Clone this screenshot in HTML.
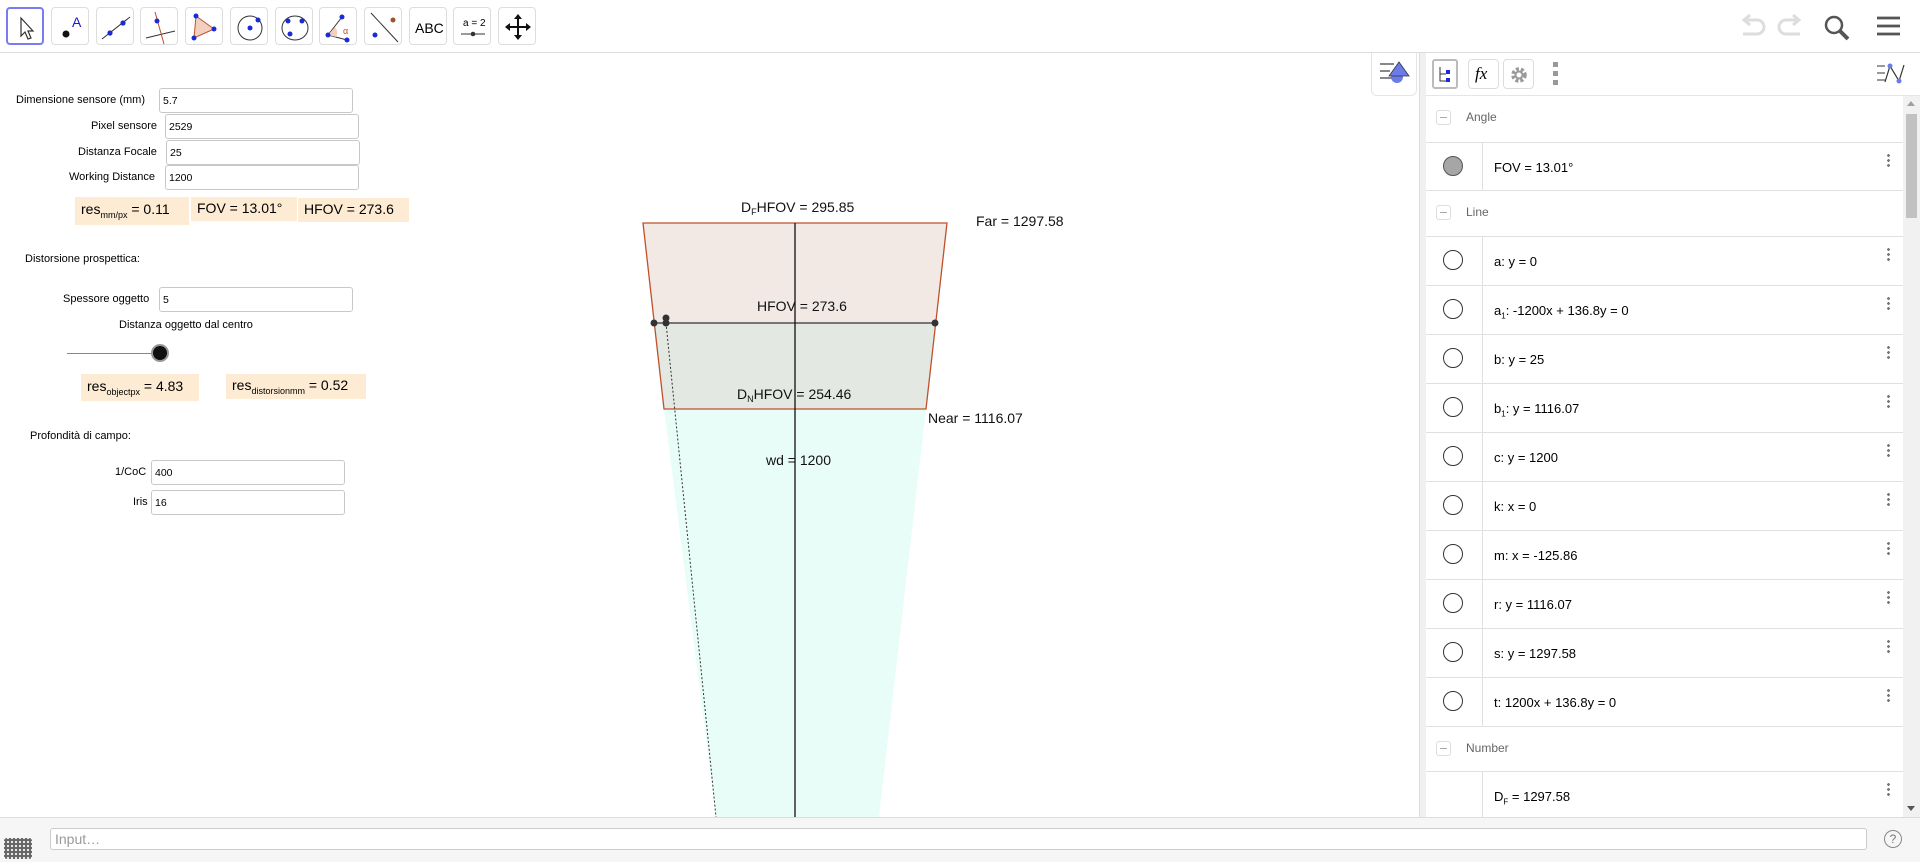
<!DOCTYPE html>
<html><head><meta charset="utf-8"><style>
*{box-sizing:border-box;margin:0;padding:0}
body{width:1920px;height:862px;overflow:hidden;background:#fff;font-family:"Liberation Sans",sans-serif;position:relative;color:#000}
.abs{position:absolute}
.tb{position:absolute;top:0;left:0;width:1920px;height:53px;background:#fff;border-bottom:1px solid #ddd}
.btn{position:absolute;top:7px;width:38px;height:38px;border:1px solid #ddd;border-radius:4px;background:#fff}
.btn svg{position:absolute;left:0;top:0}
.lbl{position:absolute;font-size:11px;white-space:nowrap}
.inp{position:absolute;height:25px;border:1px solid #c8c8c8;border-radius:3px;font-size:10.5px;padding:6px 3px;background:#fff}
.box{position:absolute;background:#fdecd3;font-size:14px;padding:4px 6px;white-space:nowrap}
.box sub{font-size:9px}
.row{position:absolute;left:1426px;width:477px;border-top:1px solid #e0e0e0;font-size:13px}
.row .c{position:absolute;left:17px;width:20px;height:20px;border:1.3px solid #333;border-radius:50%}
.row .d{position:absolute;left:56px;top:0;bottom:0;border-left:1px solid #e0e0e0}
.row .t{position:absolute;left:68px;top:17px;white-space:nowrap}
.row .m{position:absolute;left:461px;top:10px;width:3px;height:14px;background:radial-gradient(circle,#777 1.3px,transparent 1.5px) 0 0/3px 5px}
.hd{position:absolute;left:1426px;width:477px;font-size:12px;color:#666;border-top:1px solid #e0e0e0}
.hd .mn{position:absolute;left:10px;top:14px;width:15px;height:15px;border:1px solid #ddd;border-radius:3px}
.hd .mn:after{content:"";position:absolute;left:3px;top:6px;width:7px;height:1px;background:#aaa}
.hd span{position:absolute;left:40px;top:14px}
</style></head><body>
<div class="tb">
<div class="btn" style="left:6px;border:2px solid #7b7bf0"><svg width="36" height="36"><path d="M13 9 L13 27 L17 23 L20 30 L23 29 L20 22 L25 22 Z" fill="#fff" stroke="#333" stroke-width="1.2"/></svg></div>
<div class="btn" style="left:51px"><svg width="38" height="38"><circle cx="14" cy="26" r="3.5" fill="#111"/><text x="20" y="19" font-size="14" fill="#1a1ad0" font-family="Liberation Sans">A</text></svg></div>
<div class="btn" style="left:96px"><svg width="38" height="38"><line x1="5" y1="31" x2="33" y2="9" stroke="#333"/><circle cx="13" cy="25" r="2.6" fill="#1a2ad8"/><circle cx="26" cy="15" r="2.6" fill="#1a2ad8"/></svg></div>
<div class="btn" style="left:140px"><svg width="38" height="38"><line x1="5" y1="30" x2="34" y2="23" stroke="#333"/><line x1="14" y1="4" x2="23" y2="36" stroke="#c0502a"/><circle cx="16" cy="13" r="2.5" fill="#1a2ad8"/></svg></div>
<div class="btn" style="left:185px"><svg width="38" height="38"><path d="M10 8 L28 21 L8 30 Z" fill="#f3cfc0" stroke="#c0502a"/><circle cx="10" cy="8" r="2.5" fill="#1a2ad8"/><circle cx="28" cy="21" r="2.5" fill="#1a2ad8"/><circle cx="8" cy="30" r="2.5" fill="#1a2ad8"/></svg></div>
<div class="btn" style="left:230px"><svg width="38" height="38"><circle cx="19" cy="20" r="12" fill="none" stroke="#333"/><circle cx="19" cy="20" r="2.5" fill="#1a2ad8"/><circle cx="27" cy="12" r="2.5" fill="#1a2ad8"/></svg></div>
<div class="btn" style="left:275px"><svg width="38" height="38"><ellipse cx="19" cy="20" rx="13" ry="12" fill="none" stroke="#333"/><circle cx="12" cy="13" r="2.5" fill="#1a2ad8"/><circle cx="26" cy="13" r="2.5" fill="#1a2ad8"/><circle cx="14" cy="26" r="2.5" fill="#1a2ad8"/></svg></div>
<div class="btn" style="left:319px"><svg width="38" height="38"><path d="M8 27 L22 9 M8 27 L27 32" stroke="#333" fill="none"/><path d="M8 27 L15 19 Q19 24 16 29Z" fill="#f3cfc0"/><circle cx="22" cy="9" r="2.5" fill="#1a2ad8"/><circle cx="8" cy="27" r="2.5" fill="#1a2ad8"/><circle cx="27" cy="32" r="2.5" fill="#1a2ad8"/><text x="23" y="26" font-size="9" fill="#c0502a">α</text></svg></div>
<div class="btn" style="left:364px"><svg width="38" height="38"><line x1="6" y1="5" x2="33" y2="34" stroke="#333"/><circle cx="10" cy="27" r="2.5" fill="#1a2ad8"/><circle cx="28" cy="12" r="2.5" fill="#a0522d"/></svg></div>
<div class="btn" style="left:409px"><svg width="38" height="38"><text x="5" y="25" font-size="14" font-family="Liberation Sans">ABC</text></svg></div>
<div class="btn" style="left:453px"><svg width="38" height="38"><text x="9" y="18" font-size="10" font-family="Liberation Sans">a = 2</text><line x1="7" y1="26" x2="31" y2="26" stroke="#333"/><circle cx="19" cy="26" r="2.3" fill="#333"/></svg></div>
<div class="btn" style="left:498px"><svg width="38" height="38"><path d="M19 8 V30 M8 19 H30" stroke="#111" stroke-width="2"/><path d="M19 6 L15 11 H23Z M19 32 L15 27 H23Z M6 19 L11 15 V23Z M32 19 L27 15 V23Z" fill="#111"/></svg></div>
<svg class="abs" style="left:1735px;top:8px" width="185" height="40"><path d="M8 26 H22 A7 7 0 0 0 22 12 H10 M15 7 L9 12 L15 17" fill="none" stroke="#ddd" stroke-width="3"/><path d="M65 26 H51 A7 7 0 0 1 51 12 H63 M58 7 L64 12 L58 17" fill="none" stroke="#ddd" stroke-width="3"/><circle cx="99" cy="17" r="8" fill="none" stroke="#555" stroke-width="2.5"/><path d="M105 23 L113 31" stroke="#555" stroke-width="4"/><path d="M142 10 H165 M142 18 H165 M142 26 H165" stroke="#555" stroke-width="2.8"/></svg>
</div>

<div class="abs" style="left:1371px;top:53px;width:46px;height:43px;border:1px solid #e5e5e5;border-top:none;border-radius:0 0 6px 6px;background:#fff"><svg width="46" height="43"><path d="M8 11 H22 M8 18 H18 M8 25 H20" stroke="#888" stroke-width="2"/><circle cx="25" cy="24" r="6" fill="#6b7be8"/><path d="M27 9 L37 23 H17Z" fill="#6b7be8" stroke="#334" stroke-width=".8"/></svg></div>
<div class="abs" style="left:1419px;top:53px;width:7px;height:764px;background:#f0f0f0;border-left:1px solid #ddd"></div>

<div class="abs" style="left:1426px;top:53px;width:494px;height:43px;background:#fff;border-bottom:1px solid #e5e5e5"></div>
<div class="abs" style="left:1432px;top:59px;width:26px;height:30px;border:2px solid #bbb;border-radius:3px"><svg width="22" height="26"><path d="M6 6 V20 H16 M6 13 H12" stroke="#333" fill="none"/><rect x="12" y="9" width="4" height="4" fill="#1a2ad8"/><rect x="12" y="17" width="4" height="4" fill="#1a2ad8"/></svg></div>
<div class="abs" style="left:1468px;top:59px;width:31px;height:30px;border:1px solid #ddd;border-radius:4px;font-family:'Liberation Serif',serif;font-style:italic;font-size:17px;padding:4px 6px">fx</div>
<div class="abs" style="left:1503px;top:59px;width:31px;height:30px;border:1px solid #ddd;border-radius:4px"><svg width="30" height="30"><circle cx="15" cy="15" r="6" fill="none" stroke="#999" stroke-width="3.5" stroke-dasharray="3 2"/><circle cx="15" cy="15" r="3.5" fill="none" stroke="#999" stroke-width="2"/></svg></div>
<div class="abs" style="left:1553px;top:62px;width:5px;height:24px;background:repeating-linear-gradient(#999 0 5px,transparent 5px 9px)"></div>
<svg class="abs" style="left:1875px;top:60px" width="32" height="30"><path d="M2 6 H10 M2 13 H10 M2 20 H10" stroke="#999" stroke-width="2"/><path d="M10 22 L15 6 L24 21 L29 5" fill="none" stroke="#333" stroke-width="1.2"/><circle cx="15" cy="6" r="2.5" fill="#6b7be8"/><circle cx="24" cy="21" r="2.5" fill="#6b7be8"/></svg>

<div class="abs" style="left:1903px;top:96px;width:17px;height:721px;background:#f1f1f1"></div>
<div class="abs" style="left:1906px;top:114px;width:11px;height:104px;background:#c1c1c1"></div>
<div class="abs" style="left:1907px;top:101px;border:4px solid transparent;border-bottom:5px solid #a0a0a0;border-top:none;width:0"></div>
<div class="abs" style="left:1907px;top:806px;border:4px solid transparent;border-top:5px solid #555;border-bottom:none;width:0"></div>

<div class="hd" style="top:96px;height:46px;border-top:none"><div class="mn"></div><span>Angle</span></div>
<div class="row" style="top:142px;height:48px"><div class="c" style="top:13px;background:#a6a6a6;border-color:#555"></div><div class="d"></div><div class="t">FOV = 13.01°</div><div class="m"></div></div>
<div class="hd" style="top:190px;height:46px"><div class="mn"></div><span>Line</span></div>
<div class="row" style="top:236px;height:49px"><div class="c" style="top:13px"></div><div class="d"></div><div class="t">a: y = 0</div><div class="m"></div></div>
<div class="row" style="top:285px;height:49px"><div class="c" style="top:13px"></div><div class="d"></div><div class="t">a<sub style="font-size:8px">1</sub>: -1200x + 136.8y = 0</div><div class="m"></div></div>
<div class="row" style="top:334px;height:49px"><div class="c" style="top:13px"></div><div class="d"></div><div class="t">b: y = 25</div><div class="m"></div></div>
<div class="row" style="top:383px;height:49px"><div class="c" style="top:13px"></div><div class="d"></div><div class="t">b<sub style="font-size:8px">1</sub>: y = 1116.07</div><div class="m"></div></div>
<div class="row" style="top:432px;height:49px"><div class="c" style="top:13px"></div><div class="d"></div><div class="t">c: y = 1200</div><div class="m"></div></div>
<div class="row" style="top:481px;height:49px"><div class="c" style="top:13px"></div><div class="d"></div><div class="t">k: x = 0</div><div class="m"></div></div>
<div class="row" style="top:530px;height:49px"><div class="c" style="top:13px"></div><div class="d"></div><div class="t">m: x = -125.86</div><div class="m"></div></div>
<div class="row" style="top:579px;height:49px"><div class="c" style="top:13px"></div><div class="d"></div><div class="t">r: y = 1116.07</div><div class="m"></div></div>
<div class="row" style="top:628px;height:49px"><div class="c" style="top:13px"></div><div class="d"></div><div class="t">s: y = 1297.58</div><div class="m"></div></div>
<div class="row" style="top:677px;height:49px"><div class="c" style="top:13px"></div><div class="d"></div><div class="t">t: 1200x + 136.8y = 0</div><div class="m"></div></div>
<div class="hd" style="top:726px;height:45px"><div class="mn"></div><span>Number</span></div>
<div class="row" style="top:771px;height:46px"><div class="d"></div><div class="t">D<sub style="font-size:8px">F</sub> = 1297.58</div><div class="m"></div></div>

<svg class="abs" style="left:0;top:53px" width="1419" height="764">
<g transform="translate(0,-53)">
<polygon points="664,409 926,409 879,817 716,817" fill="#e9fdf8"/>
<polygon points="643,223 947,223 935,323 654,323" fill="#f2e9e5"/>
<polygon points="654,323 935,323 926,409 664,409" fill="#e3e9e2"/>
<path d="M643,223 L947,223 L926,409 L664,409 Z" fill="none" stroke="#c0502a" stroke-width="1.3"/>
<line x1="654" y1="323" x2="935" y2="323" stroke="#333" stroke-width="1.3"/>
<line x1="795" y1="223" x2="795" y2="817" stroke="#111" stroke-width="1.3"/>
<line x1="666" y1="323" x2="716" y2="817" stroke="#333" stroke-dasharray="2 2"/>
<circle cx="654" cy="323" r="3.5" fill="#333"/><circle cx="666" cy="323" r="3.5" fill="#333"/><circle cx="666" cy="318" r="3.5" fill="#333"/><circle cx="935" cy="323" r="3.5" fill="#333"/>
<g font-family="Liberation Sans" font-size="14" fill="#111" xml:space="preserve">
<text x="741" y="212">D<tspan font-size="9" dy="3">F</tspan><tspan dy="-3">HFOV  =  295.85</tspan></text>
<text x="976" y="226">Far  =  1297.58</text>
<text x="757" y="311">HFOV  =  273.6</text>
<text x="737" y="399">D<tspan font-size="9" dy="3">N</tspan><tspan dy="-3">HFOV  =  254.46</tspan></text>
<text x="928" y="423">Near  =  1116.07</text>
<text x="766" y="465">wd  =  1200</text>
</g></g></svg>

<div class="lbl" style="left:16px;top:94px">Dimensione sensore (mm)</div><div class="inp" style="left:159px;top:88px;width:194px">5.7</div>
<div class="lbl" style="left:91px;top:120px">Pixel sensore</div><div class="inp" style="left:165px;top:114px;width:194px">2529</div>
<div class="lbl" style="left:78px;top:146px">Distanza Focale</div><div class="inp" style="left:166px;top:140px;width:194px">25</div>
<div class="lbl" style="left:69px;top:171px">Working Distance</div><div class="inp" style="left:165px;top:165px;width:194px">1200</div>
<div class="box" style="left:75px;top:197px;width:114px;height:28px">res<sub>mm/px</sub> = 0.11</div>
<div class="box" style="left:191px;top:197px;width:106px;height:24px;padding-top:3px">FOV = 13.01°</div>
<div class="box" style="left:298px;top:198px;width:111px;height:24px;padding-top:3px">HFOV = 273.6</div>
<div class="lbl" style="left:25px;top:253px">Distorsione prospettica:</div>
<div class="lbl" style="left:63px;top:293px">Spessore oggetto</div><div class="inp" style="left:159px;top:287px;width:194px">5</div>
<div class="lbl" style="left:119px;top:319px">Distanza oggetto dal centro</div>
<div class="abs" style="left:67px;top:353px;width:93px;height:1px;background:#888"></div>
<div class="abs" style="left:151px;top:344px;width:18px;height:18px;border-radius:50%;background:#111;border:2px solid #999"></div>
<div class="box" style="left:81px;top:374px;width:118px;height:27px">res<sub>objectpx</sub> = 4.83</div>
<div class="box" style="left:226px;top:374px;width:140px;height:25px;padding-top:3px">res<sub>distorsionmm</sub> = 0.52</div>
<div class="lbl" style="left:30px;top:430px">Profondità di campo:</div>
<div class="lbl" style="left:115px;top:466px">1/CoC</div><div class="inp" style="left:151px;top:460px;width:194px">400</div>
<div class="lbl" style="left:133px;top:496px">Iris</div><div class="inp" style="left:151px;top:490px;width:194px">16</div>

<div class="abs" style="left:0;top:817px;width:1920px;height:45px;background:#f6f6f6;border-top:1px solid #ddd"></div>
<div class="abs" style="left:50px;top:828px;width:1817px;height:22px;background:#fff;border:1px solid #ccc;border-radius:3px;font-size:14px;color:#999;padding:2px 4px">Input…</div>
<div class="abs" style="left:4px;top:838px;width:28px;height:21px;background:#666;border-radius:3px;background-image:radial-gradient(#eee 1px,transparent 1.3px);background-size:4px 4px;background-position:2px 2px"></div>
<div class="abs" style="left:1884px;top:830px;width:18px;height:18px;border:1.5px solid #888;border-radius:50%;font-size:12px;color:#777;text-align:center;line-height:16px">?</div>
</body></html>
